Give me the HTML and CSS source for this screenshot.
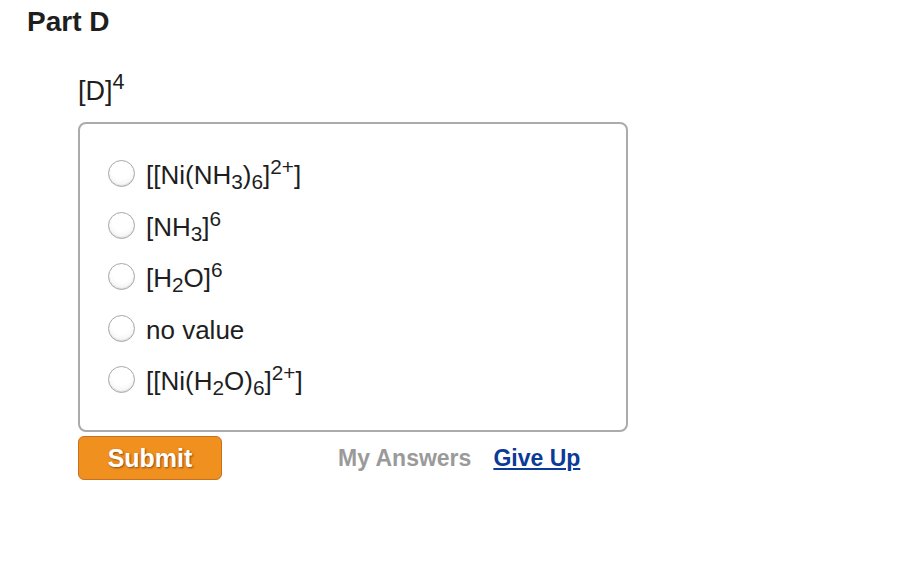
FILE: index.html
```html
<!DOCTYPE html>
<html lang="en">
<head>
  <meta charset="UTF-8">
  <title>Part D</title>
  <link rel="stylesheet" href="styles.css">
</head>
<body>
  <!-- Titre de la partie -->
  <h2 class="part-title">Part D</h2>

  <div class="question">
    <div class="prompt">[D]<sup>4</sup></div>

    <!-- Choix de réponses -->
    <div class="choices">
      <label class="choice"><span class="radio"></span><span class="label">[[Ni(NH<sub>3</sub>)<sub>6</sub>]<sup>2+</sup>]</span></label>
      <label class="choice"><span class="radio"></span><span class="label">[NH<sub>3</sub>]<sup>6</sup></span></label>
      <label class="choice"><span class="radio"></span><span class="label">[H<sub>2</sub>O]<sup>6</sup></span></label>
      <label class="choice"><span class="radio"></span><span class="label">no value</span></label>
      <label class="choice"><span class="radio"></span><span class="label">[[Ni(H<sub>2</sub>O)<sub>6</sub>]<sup>2+</sup>]</span></label>
    </div>

    <!-- Boutons -->
    <div class="actions">
      <button class="submit-btn">Submit</button>
      <span class="my-answers">My Answers</span>
      <a class="give-up" href="#">Give Up</a>
    </div>
  </div>
</body>
</html>
```

FILE: styles.css
```css
/* Style global */
body, html {
  margin: 0;
  padding: 0;
  font-family: 'Liberation Sans', Arial, Helvetica, sans-serif;
  color: #1e1e1e;
  background: #fff;
}

/* Titre */
.part-title {
  margin: 0;
  padding: 6px 0 0 27px;
  font-size: 28px;
  line-height: 32px;
  font-weight: bold;
}

.question {
  padding-left: 78px;
}

.prompt {
  margin-top: 38px;
  font-size: 27px;
  line-height: 30px;
}

sup, sub {
  font-size: 0.8em;
  line-height: 0;
}

sup {
  vertical-align: 0.5em;
}

sub {
  vertical-align: -0.25em;
}

/* Boîte des choix */
.choices {
  margin-top: 16px;
  width: 550px;
  height: 310px;
  border: 2px solid #ababab;
  border-radius: 8px;
  padding-top: 24px;
  box-sizing: border-box;
}

.choice {
  display: flex;
  align-items: center;
  height: 51.5px;
  padding-left: 28px;
  font-size: 26px;
}

.radio {
  width: 25px;
  height: 25px;
  border: 1.5px solid #a8a8a8;
  border-radius: 50%;
  background: radial-gradient(circle at 50% 35%, #fff 45%, #ebebeb 100%);
  box-shadow: inset 0 -1px 1px rgba(0, 0, 0, 0.1);
  margin-right: 11px;
  flex-shrink: 0;
}

.label {
  position: relative;
  top: 2px;
}

/* Ligne des boutons */
.actions {
  display: flex;
  align-items: center;
  margin-top: 4px;
}

.submit-btn {
  width: 144px;
  height: 44px;
  background: #f0901e;
  border: 1px solid #c9701f;
  border-radius: 6px;
  color: #fff;
  font-family: 'Liberation Sans', Arial, Helvetica, sans-serif;
  font-size: 25px;
  font-weight: bold;
  text-shadow: 1px 1px 2px rgba(80, 30, 0, 0.6);
  padding: 0;
  cursor: pointer;
}

.my-answers {
  margin-left: 116px;
  font-size: 23px;
  font-weight: bold;
  color: #9a9a9a;
}

.give-up {
  margin-left: 22px;
  font-size: 23px;
  font-weight: bold;
  color: #0b3a99;
  text-decoration: underline;
}
```
